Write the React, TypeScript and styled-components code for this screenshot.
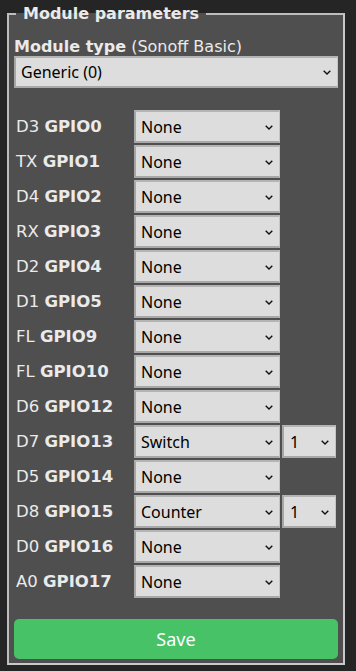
import { FC } from 'react'

import styled, { createGlobalStyle } from 'styled-components'

const GlobalStyle = createGlobalStyle`
	html, body {
		margin: 0;
		padding: 0;
		background: #252525;
	}
	body {
		width: 356px;
		min-height: 671px;
		font-family: 'DejaVu Sans', Verdana, sans-serif;
		color: #eaeaea;
	}
`

const Page = styled.div`
	padding: 4px 11px 6px 7px;
`

const Fieldset = styled.fieldset`
	margin: 0;
	padding: 0 5px 4px 5px;
	background: #4f4f4f;
	border: 2px solid #c9c9c9;
	border-left-color: #bdbdbd;
	border-top-color: #bdbdbd;
	min-width: 0;
`

const Legend = styled.legend`
	margin-left: 2px;
	padding: 0 7px;
	font-size: 16px;
	font-weight: bold;
	line-height: 19px;
`

const Form = styled.div`
	display: flex;
	flex-direction: column;
`

const ModuleLabel = styled.div`
	margin-top: 14px;
	font-size: 16px;
	line-height: 19px;
	b {
		font-weight: bold;
	}
`

const GpioTable = styled.div`
	margin-top: 22px;
	display: flex;
	flex-direction: column;
	gap: 2px;
`

const Row = styled.div`
	display: flex;
	align-items: center;
	gap: 2px;
`

const PinLabel = styled.div`
	width: 118px;
	padding-left: 2px;
	box-sizing: border-box;
	font-size: 16.5px;
	line-height: 19px;
	white-space: nowrap;
`

const SelectBox = styled.div<{ $width: number; $height: number }>`
	position: relative;
	width: ${(p) => p.$width}px;
	height: ${(p) => p.$height}px;
	flex: none;
`

const Select = styled.select<{ $pad: number }>`
	appearance: none;
	-webkit-appearance: none;
	width: 100%;
	height: 100%;
	box-sizing: border-box;
	margin: 0;
	padding: 0 20px 0 ${(p) => p.$pad}px;
	background: #dddddd;
	color: #000;
	font-family: 'Noto Sans', 'Open Sans', sans-serif;
	font-size: 16px;
	border-style: solid;
	border-width: 2px 1px 2px 2px;
	border-top-color: #b4b4b4;
	border-left-color: #a6a6a6;
	border-right-color: #c4c4c4;
	border-bottom-color: #a8a8a8;
	border-radius: 0;
	outline: none;
`

const Chevron = styled.svg`
	position: absolute;
	right: 7px;
	top: 50%;
	margin-top: -2px;
	width: 8px;
	height: 5px;
	pointer-events: none;
`

const SaveButton = styled.button`
	margin-top: 21px;
	height: 40px;
	width: 100%;
	border: 0;
	border-radius: 5px;
	background: #47c266;
	color: #faffff;
	font-family: 'Noto Sans', 'Open Sans', sans-serif;
	font-size: 18px;
	cursor: pointer;
`

type DropProps = {
	value: string
	width: number
	height?: number
	pad?: number
}

const Drop: FC<DropProps> = ({ value, width, height = 33, pad = 5 }) => (
	<SelectBox $width={width} $height={height}>
		<Select $pad={pad} defaultValue={value}>
			<option value={value}>{value}</option>
		</Select>
		<Chevron viewBox="0 0 8 5">
			<path d="M0.7 0.7 L4 4 L7.3 0.7" fill="none" stroke="#111" strokeWidth="1.4" />
		</Chevron>
	</SelectBox>
)

const pins: [string, number, string, string?][] = [
	['D3', 0, 'None'],
	['TX', 1, 'None'],
	['D4', 2, 'None'],
	['RX', 3, 'None'],
	['D2', 4, 'None'],
	['D1', 5, 'None'],
	['FL', 9, 'None'],
	['FL', 10, 'None'],
	['D6', 12, 'None'],
	['D7', 13, 'Switch', '1'],
	['D5', 14, 'None'],
	['D8', 15, 'Counter', '1'],
	['D0', 16, 'None'],
	['A0', 17, 'None'],
]

const App: FC = () => {
	return (
		<Page>
			<GlobalStyle />
			<Fieldset>
				<Legend>Module parameters</Legend>
				<Form>
					<ModuleLabel>
						<b>Module type</b> (Sonoff Basic)
					</ModuleLabel>
					<Drop value="Generic (0)" width={324} height={32} />
					<GpioTable>
						{pins.map(([pin, gpio, func, idx]) => (
							<Row key={gpio}>
								<PinLabel>
									{pin} <b>GPIO{gpio}</b>
								</PinLabel>
								<Drop value={func} width={146} />
								{idx && <Drop value={idx} width={54} pad={6} />}
							</Row>
						))}
					</GpioTable>
					<SaveButton>Save</SaveButton>
				</Form>
			</Fieldset>
		</Page>
	)
}

export default App
